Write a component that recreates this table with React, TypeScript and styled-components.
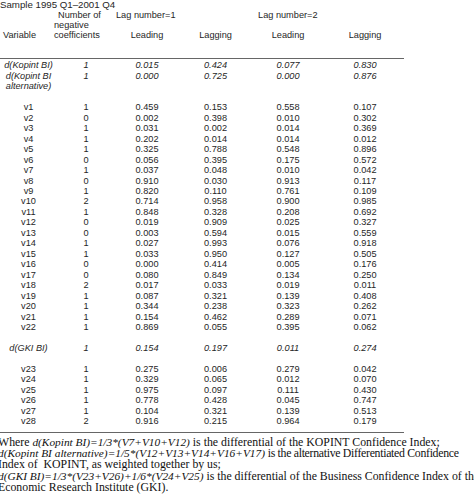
import React from "react";
import styled, { createGlobalStyle } from "styled-components";

const GlobalStyle = createGlobalStyle`
  html, body {
    margin: 0;
    padding: 0;
    background: #ffffff;
    overflow: hidden;
  }
`;

const Page = styled.div`
  width: 474px;
  height: 503px;
  overflow: hidden;
  font-family: "Liberation Sans", Arial, sans-serif;
  font-size: 9.2px;
  color: #262626;
`;

const Caption = styled.div`
  font-size: 9.7px;
  line-height: 10.5px;
  margin-top: -0.5px;
  margin-bottom: -0.5px;
  white-space: nowrap;
`;

const Table = styled.table`
  width: 404px;
  border-collapse: collapse;
  table-layout: fixed;
  td:nth-child(6) {
    padding-left: 5px;
  }
`;

const HeadRow = styled.tr<{ $last?: boolean }>`
  td {
    line-height: 10.45px;
    padding: 0;
    padding-bottom: ${(p) => (p.$last ? "17px" : "0")};
    border-bottom: ${(p) => (p.$last ? "1px solid #666" : "none")};
    white-space: nowrap;
    vertical-align: top;
  }
`;

interface IHeadCell {
  $align?: "left" | "center";
  $indent?: number;
}
const HeadCell = styled.td<IHeadCell>`
  text-align: ${(p) => p.$align || "center"};
  text-indent: ${(p) => p.$indent || 0}px;
`;

const Spacer = styled.tr`
  height: 2px;
`;

interface IRow {
  $italic?: boolean;
}
const Row = styled.tr<IRow>`
  height: 10.47px;
  font-style: ${(p) => (p.$italic ? "italic" : "normal")};
  td {
    padding: 0;
    line-height: 10.47px;
    text-align: center;
    white-space: nowrap;
  }
  td:first-child {
    padding-left: 3px;
  }
`;

const Rule = styled.div`
  width: 404px;
  border-top: 1px solid #666;
  margin-top: 5px;
`;

const Notes = styled.div`
  margin-top: 4px;
  margin-left: -2px;
  font-family: "Liberation Serif", "Times New Roman", serif;
  font-size: 11.8px;
  line-height: 11.25px;
  color: #111;
`;

const NoteLine = styled.div<{ $tight?: boolean }>`
  white-space: nowrap;
  letter-spacing: ${(p) => (p.$tight ? "-0.3px" : "0")};
`;

const Formula = styled.i`
  font-style: italic;
  font-size: 11.35px;
  letter-spacing: 0;
`;

type Line = [string, string, string, string, string, string] | null;

const topRows: { cells: Line; italic?: boolean }[] = [
  { cells: ["d(Kopint BI)", "1", "0.015", "0.424", "0.077", "0.830"], italic: true },
  { cells: ["d(Kopint BI", "1", "0.000", "0.725", "0.000", "0.876"], italic: true },
  { cells: ["alternative)", "", "", "", "", ""], italic: true },
  { cells: null },
];

const kopint: Line[] = [
  ["v1", "1", "0.459", "0.153", "0.558", "0.107"],
  ["v2", "0", "0.002", "0.398", "0.010", "0.302"],
  ["v3", "1", "0.031", "0.002", "0.014", "0.369"],
  ["v4", "1", "0.202", "0.014", "0.014", "0.012"],
  ["v5", "1", "0.325", "0.788", "0.548", "0.896"],
  ["v6", "0", "0.056", "0.395", "0.175", "0.572"],
  ["v7", "1", "0.037", "0.048", "0.010", "0.042"],
  ["v8", "0", "0.910", "0.030", "0.913", "0.117"],
  ["v9", "1", "0.820", "0.110", "0.761", "0.109"],
  ["v10", "2", "0.714", "0.958", "0.900", "0.985"],
  ["v11", "1", "0.848", "0.328", "0.208", "0.692"],
  ["v12", "0", "0.019", "0.909", "0.025", "0.327"],
  ["v13", "0", "0.003", "0.594", "0.015", "0.559"],
  ["v14", "1", "0.027", "0.993", "0.076", "0.918"],
  ["v15", "1", "0.033", "0.950", "0.127", "0.505"],
  ["v16", "0", "0.000", "0.414", "0.005", "0.176"],
  ["v17", "0", "0.080", "0.849", "0.134", "0.250"],
  ["v18", "2", "0.017", "0.033", "0.019", "0.011"],
  ["v19", "1", "0.087", "0.321", "0.139", "0.408"],
  ["v20", "1", "0.344", "0.238", "0.323", "0.262"],
  ["v21", "1", "0.154", "0.462", "0.289", "0.071"],
  ["v22", "1", "0.869", "0.055", "0.395", "0.062"],
];

const gki: Line[] = [
  ["v23", "1", "0.275", "0.006", "0.279", "0.042"],
  ["v24", "1", "0.329", "0.065", "0.012", "0.070"],
  ["v25", "1", "0.975", "0.097", "0.111", "0.430"],
  ["v26", "1", "0.778", "0.428", "0.045", "0.747"],
  ["v27", "1", "0.104", "0.321", "0.139", "0.513"],
  ["v28", "2", "0.916", "0.215", "0.964", "0.179"],
];

const DataRow = ({ cells, italic }: { cells: Line; italic?: boolean }) => (
  <Row $italic={italic}>
    {(cells || ["", "", "", "", "", ""]).map((c, i) => (
      <td key={i}>{c}</td>
    ))}
  </Row>
);

export default function App() {
  return (
    <Page>
      <GlobalStyle />
      <Caption>Sample 1995 Q1–2001 Q4</Caption>
      <Table>
        <colgroup>
          <col style={{ width: 54 }} />
          <col style={{ width: 64 }} />
          <col style={{ width: 58 }} />
          <col style={{ width: 79 }} />
          <col style={{ width: 66 }} />
          <col style={{ width: 83 }} />
        </colgroup>
        <thead>
          <HeadRow>
            <HeadCell />
            <HeadCell $align="left" $indent={4}>
              Number of
            </HeadCell>
            <HeadCell colSpan={2} $align="left" $indent={-2}>
              Lag number=1
            </HeadCell>
            <HeadCell colSpan={2} $align="left" $indent={3}>
              Lag number=2
            </HeadCell>
          </HeadRow>
          <HeadRow>
            <HeadCell />
            <HeadCell $align="left">negative</HeadCell>
            <HeadCell colSpan={2} />
            <HeadCell colSpan={2} />
          </HeadRow>
          <HeadRow $last>
            <HeadCell $align="left" $indent={3}>
              Variable
            </HeadCell>
            <HeadCell $align="left">coefficients</HeadCell>
            <HeadCell>Leading</HeadCell>
            <HeadCell>Lagging</HeadCell>
            <HeadCell>Leading</HeadCell>
            <HeadCell>Lagging</HeadCell>
          </HeadRow>
        </thead>
        <tbody>
          <Spacer />
          {topRows.map((r, i) => (
            <DataRow key={"t" + i} cells={r.cells} italic={r.italic} />
          ))}
          {kopint.map((r, i) => (
            <DataRow key={"k" + i} cells={r} />
          ))}
          <DataRow cells={null} />
          <DataRow cells={["d(GKI BI)", "1", "0.154", "0.197", "0.011", "0.274"]} italic />
          <DataRow cells={null} />
          {gki.map((r, i) => (
            <DataRow key={"g" + i} cells={r} />
          ))}
        </tbody>
      </Table>
      <Rule />
      <Notes>
        <NoteLine>
          Where <Formula>d(Kopint BI)=1/3*(V7+V10+V12)</Formula> is the differential of the KOPINT
          Confidence Index;
        </NoteLine>
        <NoteLine $tight>
          <Formula>d(Kopint BI alternative)=1/5*(V12+V13+V14+V16+V17)</Formula> is the alternative
          Differentiated Confidence
        </NoteLine>
        <NoteLine>Index of &nbsp;KOPINT, as weighted together by us;</NoteLine>
        <NoteLine>
          <Formula>d(GKI BI)=1/3*(V23+V26)+1/6*(V24+V25)</Formula> is the differential of the
          Business Confidence Index of the
        </NoteLine>
        <NoteLine>Economic Research Institute (GKI).</NoteLine>
      </Notes>
    </Page>
  );
}
